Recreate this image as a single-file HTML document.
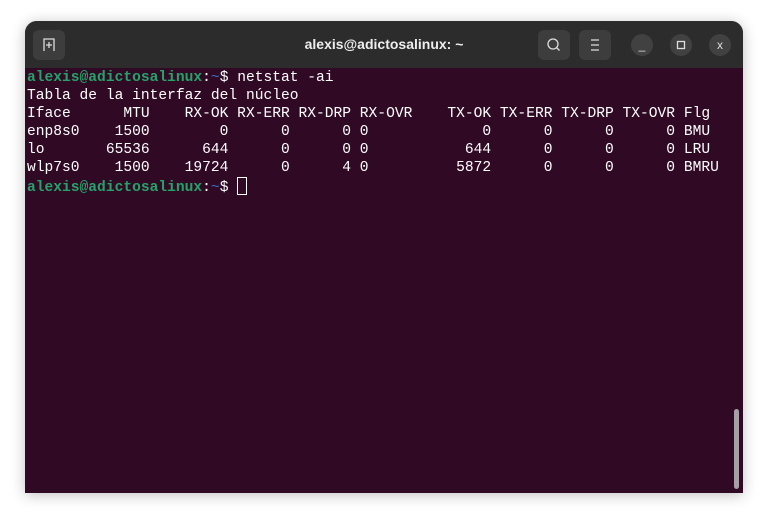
<!DOCTYPE html>
<html><head><style>
html,body{margin:0;padding:0;background:#fff;width:768px;height:521px;overflow:hidden}
.win{position:absolute;left:25px;top:21px;width:718px;height:472px;border-radius:12px 12px 0 0;overflow:hidden;box-shadow:0 2px 14px rgba(0,0,0,.25);background:#300a24}
.hdr{position:absolute;left:0;top:0;width:718px;height:47px;background:#2c2c2c}
.btn{position:absolute;top:9px;width:32px;height:30px;background:#3d3d3d;border-radius:6px}
.circ{position:absolute;top:13px;width:22px;height:22px;border-radius:50%;background:#414141;color:#ddd;font:12px "Liberation Sans",sans-serif;text-align:center;line-height:22px}
.title{position:absolute;left:0;right:0;top:15px;text-align:center;color:#eee;font:bold 14px "Liberation Sans",sans-serif}
pre{position:absolute;left:2px;top:48px;margin:0;color:#fff;font:14.6px/18px "Liberation Mono",monospace}
.g{color:#26a269;font-weight:bold}.b{color:#3a6fc4}
.cur{display:inline-block;width:8px;height:16px;border:1px solid #fff;vertical-align:-4px}
.sb{position:absolute;left:709px;top:388px;width:5px;height:80px;border-radius:3px;background:#a89ea5}
</style></head><body>
<div class="win">
<div class="hdr">
<div class="btn" style="left:8px"><svg width="32" height="30"><path d="M11 21V9h10v12M16 12v6M13 15h6" stroke="#ddd" stroke-width="1.3" fill="none"/></svg></div>
<div class="title">alexis@adictosalinux: ~</div>
<div class="btn" style="left:513px"><svg width="32" height="30"><circle cx="15" cy="14" r="5" stroke="#ddd" stroke-width="1.3" fill="none"/><path d="M18.5 17.5l3 3" stroke="#ddd" stroke-width="1.3"/></svg></div>
<div class="btn" style="left:554px"><svg width="32" height="30"><path d="M12 10h8M12 15h8M12 20h8" stroke="#ddd" stroke-width="1.3"/></svg></div>
<div class="circ" style="left:606px">_</div>
<div class="circ" style="left:645px"><svg width="22" height="22"><rect x="7.5" y="7.5" width="7" height="7" stroke="#ddd" stroke-width="1.3" fill="none"/></svg></div>
<div class="circ" style="left:684px">x</div>
</div>
<pre><span class="g">alexis@adictosalinux</span>:<span class="b">~</span>$ netstat -ai
Tabla de la interfaz del núcleo
Iface      MTU    RX-OK RX-ERR RX-DRP RX-OVR    TX-OK TX-ERR TX-DRP TX-OVR Flg
enp8s0    1500        0      0      0 0             0      0      0      0 BMU
lo       65536      644      0      0 0           644      0      0      0 LRU
wlp7s0    1500    19724      0      4 0          5872      0      0      0 BMRU
<span class="g">alexis@adictosalinux</span>:<span class="b">~</span>$ <span class="cur"></span></pre>
<div class="sb"></div>
</div>
</body></html>
